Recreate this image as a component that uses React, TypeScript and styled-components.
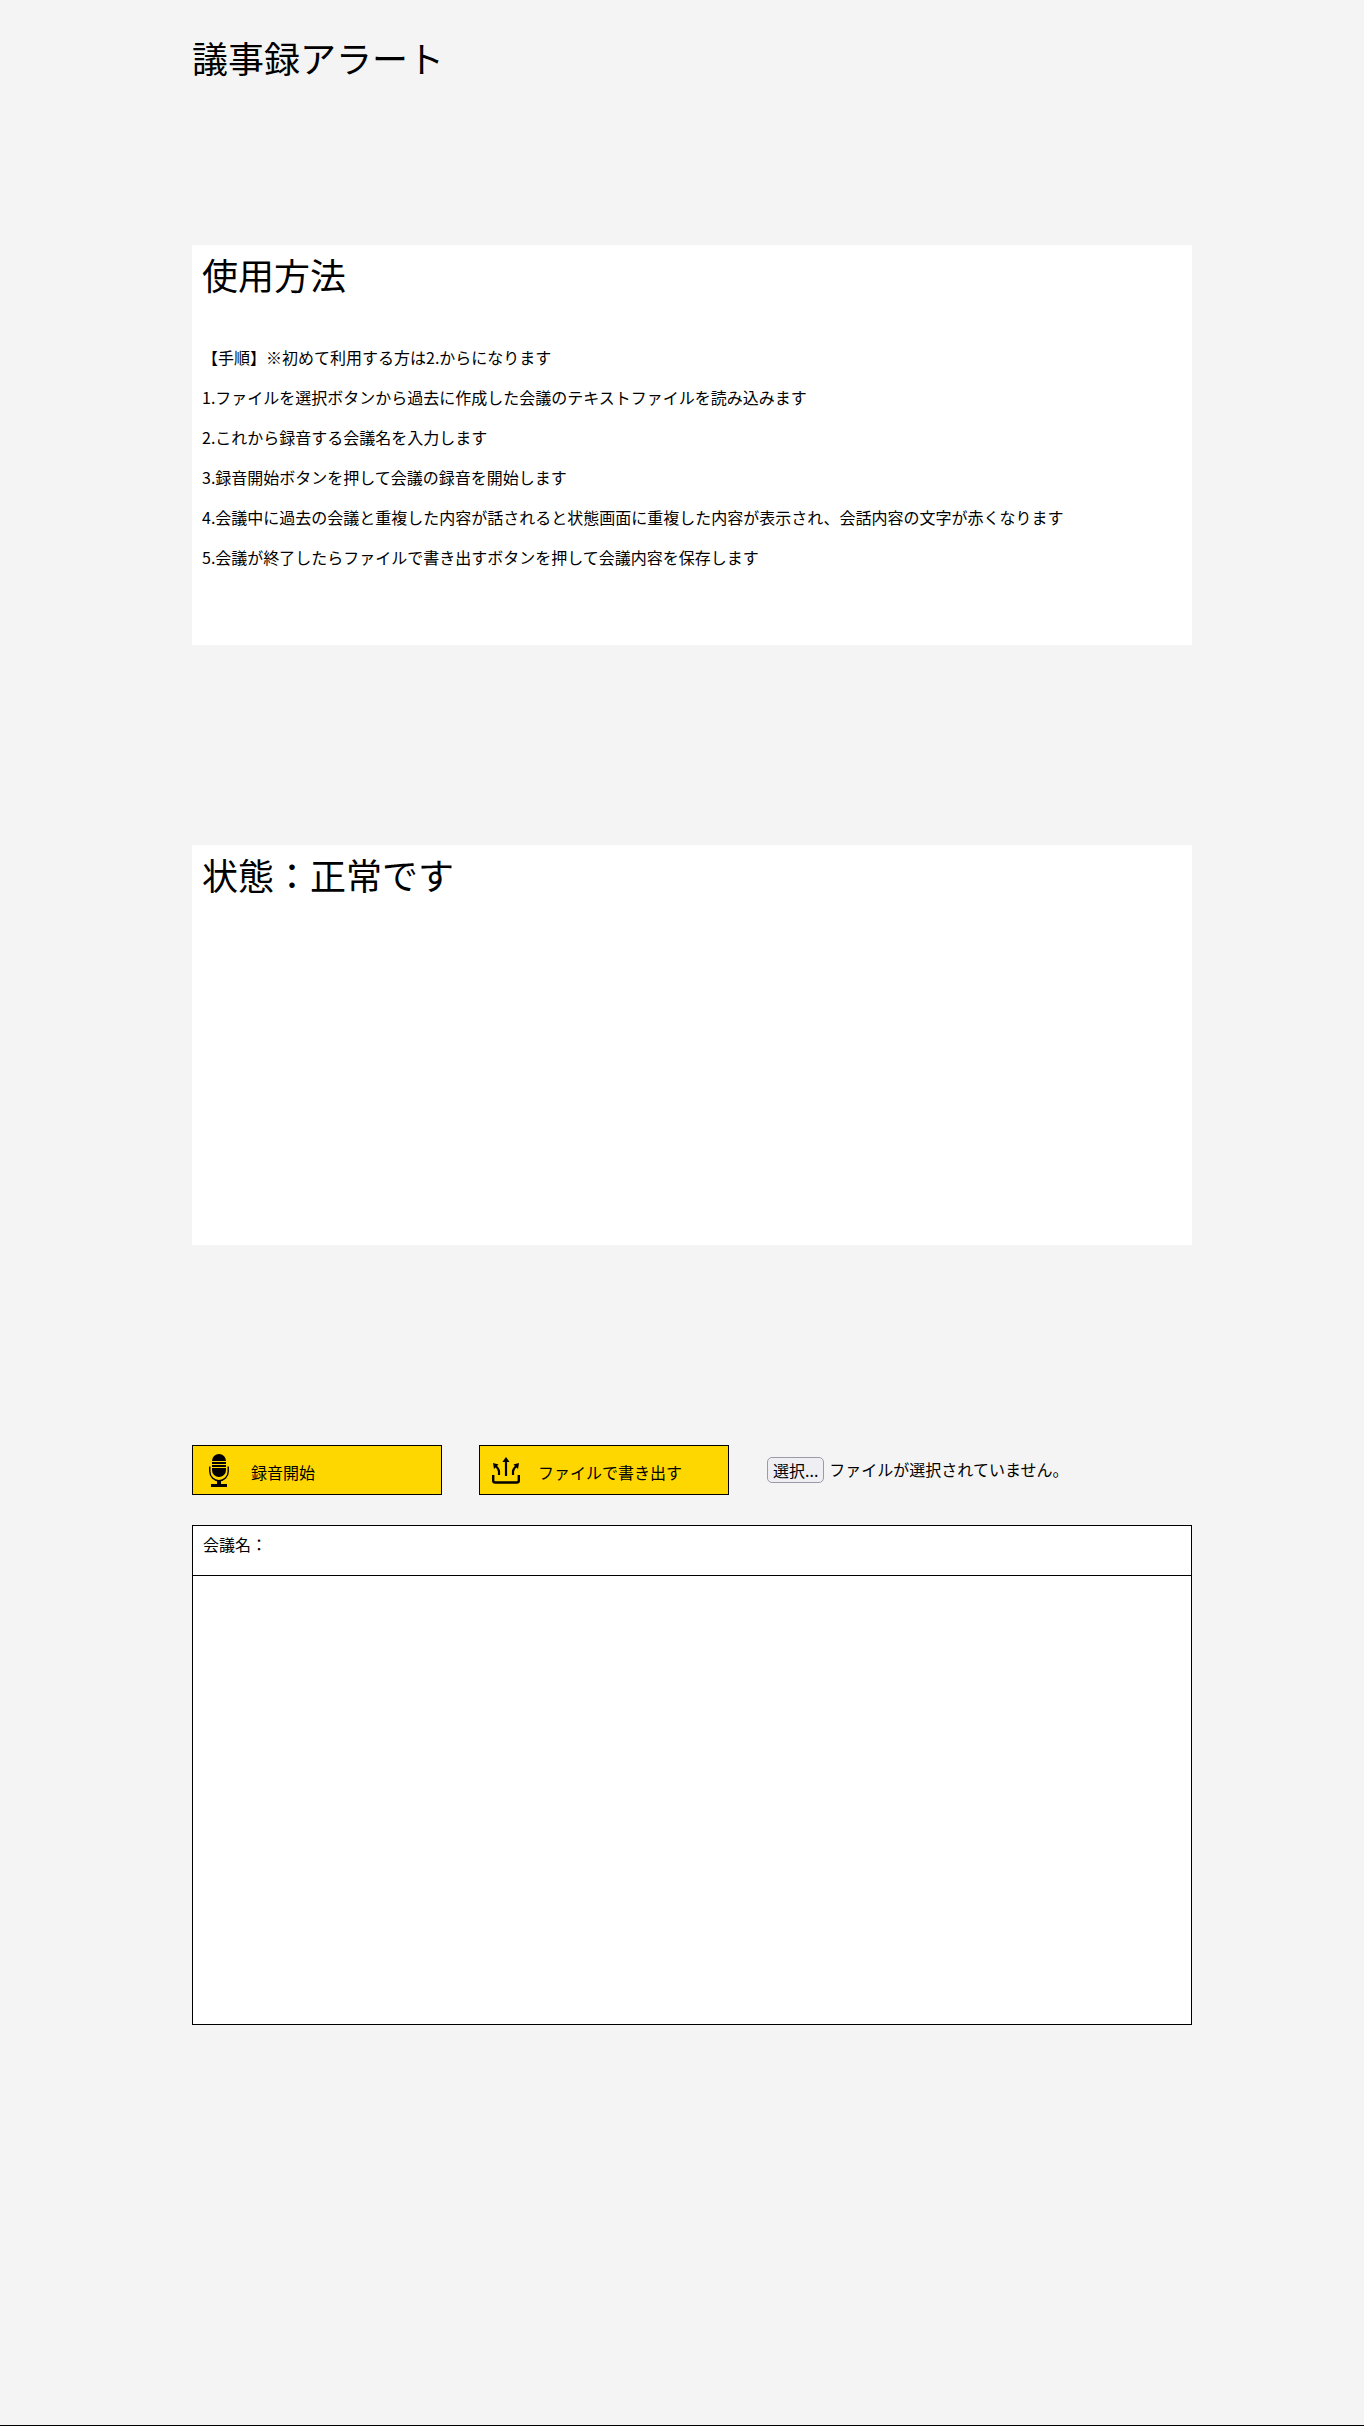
import React from "react";
import styled, { createGlobalStyle } from "styled-components";

const steps = [
  "【手順】※初めて利用する方は2.からになります",
  "1.ファイルを選択ボタンから過去に作成した会議のテキストファイルを読み込みます",
  "2.これから録音する会議名を入力します",
  "3.録音開始ボタンを押して会議の録音を開始します",
  "4.会議中に過去の会議と重複した内容が話されると状態画面に重複した内容が表示され、会話内容の文字が赤くなります",
  "5.会議が終了したらファイルで書き出すボタンを押して会議内容を保存します",
];

const MicIcon = () => (
  <svg width="20" height="33" viewBox="0 0 20 33" fill="none">
    <rect x="3" y="0" width="14" height="23" rx="7" fill="#000" />
    <path d="M3 7.500h14M3 10.500h14M3 13.500h14" stroke="#ffd700" strokeWidth="1" />
    <path d="M0.800 12.500v5a9.200 9.200 0 0 0 18.400 0v-5" stroke="#000" strokeWidth="1.400" />
    <rect x="8" y="26" width="4" height="5" fill="#000" />
    <rect x="2" y="30" width="16" height="3" fill="#000" />
  </svg>
);

const ExportIcon = () => (
  <svg width="28" height="27" viewBox="0 0 28 27" fill="none" stroke="#000" strokeWidth="2.200">
    <path d="M14 3v16" />
    <path d="M14 0l3.600 5h-7.200z" fill="#000" stroke="none" />
    <path d="M21 18v-3.500c0-2 1-3.500 3.500-5.500" />
    <path d="M27 6l-1 6-4.500-4.500z" fill="#000" stroke="none" />
    <path d="M7 18v-3.500c0-2-1-3.500-3.500-5.500" />
    <path d="M1 6l1 6 4.500-4.500z" fill="#000" stroke="none" />
    <path d="M1.200 18v5.500a2 2 0 0 0 2 2h21.600a2 2 0 0 0 2-2V18" strokeWidth="2.400" />
  </svg>
);

export default function App() {
  return (
    <>
      <GlobalStyle />
      <Page>
        <Container>
          <Title>議事録アラート</Title>
          <Panel>
            <PanelTitle>使用方法</PanelTitle>
            <StepList>
              {steps.map((step) => (
                <Step key={step}>{step}</Step>
              ))}
            </StepList>
          </Panel>
          <Panel>
            <PanelTitle>状態：正常です</PanelTitle>
          </Panel>
          <Toolbar>
            <ActionButton>
              <IconSlot>
                <MicIcon />
              </IconSlot>
              録音開始
            </ActionButton>
            <ActionButton>
              <IconSlot>
                <ExportIcon />
              </IconSlot>
              ファイルで書き出す
            </ActionButton>
            <FilePicker>
              <FileButton>選択...</FileButton>
              <FileStatus>ファイルが選択されていません。</FileStatus>
            </FilePicker>
          </Toolbar>
          <MeetingBox>
            <MeetingName>会議名：</MeetingName>
            <MeetingBody />
          </MeetingBox>
        </Container>
      </Page>
    </>
  );
}

const GlobalStyle = createGlobalStyle`
  html, body {
    margin: 0;
    padding: 0;
    background: #f4f4f4;
    color: #000;
    font-family: "Noto Sans CJK JP", "Noto Sans", sans-serif;
  }

  * {
    box-sizing: border-box;
  }
`;

const Page = styled.div`
  height: 2426px;
  border-bottom: 1px solid #000;
`;

const Container = styled.main`
  width: 1000px;
  margin-left: 192px;
`;

const Title = styled.h1`
  margin: 0;
  height: 245px;
  padding-top: 34px;
  font-size: 36px;
  line-height: 46px;
  font-weight: 400;
`;

const Panel = styled.section`
  height: 400px;
  margin-bottom: 200px;
  padding: 6px 10px;
  background: #fff;
`;

const PanelTitle = styled.h2`
  margin: 0;
  font-size: 36px;
  line-height: 46px;
  font-weight: 400;
`;

const StepList = styled.div`
  margin-top: 48px;
`;

const Step = styled.p`
  margin: 0 0 16px;
  font-size: 16px;
  line-height: 24px;
`;

const Toolbar = styled.div`
  display: flex;
  height: 50px;
  gap: 37px;
  margin-bottom: 30px;
`;

const ActionButton = styled.div`
  display: flex;
  align-items: center;
  width: 250px;
  height: 50px;
  padding-top: 4px;
  background: #ffd700;
  border: 1px solid #000;
  font-size: 16px;
`;

const IconSlot = styled.span`
  display: flex;
  flex: none;
  justify-content: center;
  align-items: center;
  width: 52px;
  margin-top: -4px;
  margin-right: 6px;
`;

const FilePicker = styled.div`
  display: flex;
  align-items: flex-start;
  gap: 5px;
  padding-top: 12px;
  margin-left: 1px;
`;

const FileButton = styled.button`
  height: 26px;
  padding: 0 5px;
  background: #efeff3;
  border: 1px solid #9a9aaa;
  border-radius: 5px;
  color: #000;
  font-family: inherit;
  font-size: 16px;
  line-height: 22px;
`;

const FileStatus = styled.span`
  font-size: 16px;
  line-height: 24px;
`;

const MeetingBox = styled.div`
  height: 500px;
  background: #fff;
  border: 1px solid #000;
`;

const MeetingName = styled.div`
  height: 50px;
  padding: 5px 10px;
  border-bottom: 1px solid #000;
  font-size: 16px;
  line-height: 26px;
`;

const MeetingBody = styled.div`
  height: 448px;
`;
